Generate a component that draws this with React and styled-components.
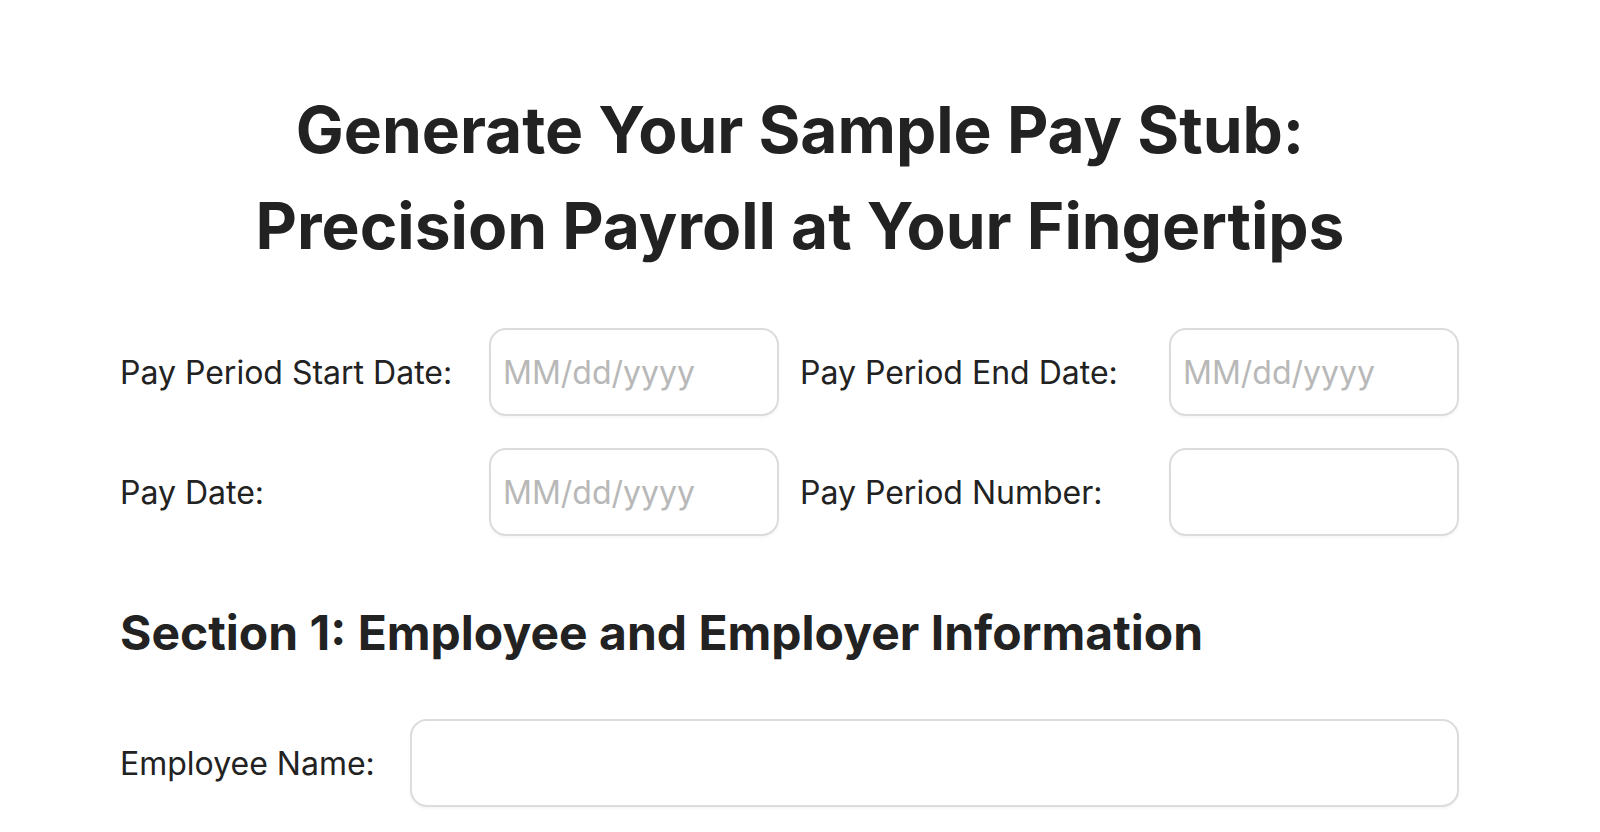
import React from 'react'
import styled, { createGlobalStyle } from 'styled-components'

const GlobalStyle = createGlobalStyle`
  body {
    margin: 0;
    background: #fff;
    font-family: 'Inter', 'Liberation Sans', sans-serif;
    color: #222;
  }
`

const Page = styled.main`
  max-width: 1360px;
  margin: 0 auto;
  padding: 82px 0 40px;
`

const Title = styled.h1`
  margin: 0 0 54px;
  text-align: center;
  font-size: 64px;
  line-height: 96px;
  font-weight: 700;
  color: #222;
`

const FieldGrid = styled.div`
  display: grid;
  grid-template-columns: 1fr 1fr;
  row-gap: 32px;
`

const Field = styled.label`
  display: grid;
  grid-template-columns: 1fr 290px;
  align-items: center;
  padding-right: 21px;
`

const WideField = styled.label`
  display: flex;
  align-items: center;
  gap: 35px;
  padding-right: 21px;
`

const LabelText = styled.span`
  font-size: 32px;
  color: #222;
  white-space: nowrap;
`

const Input = styled.input`
  box-sizing: border-box;
  width: 100%;
  height: 88px;
  padding: 0 12px;
  border: 2px solid #dcdcdc;
  border-radius: 17px;
  box-shadow: 0 2px 3px rgba(0, 0, 0, 0.04);
  font-family: inherit;
  font-size: 32px;
  color: #222;
  background: #fff;
  outline: none;
  &::placeholder {
    color: #b8b8b8;
  }
`

const SectionTitle = styled.h2`
  margin: 62px 0 51px;
  font-size: 48px;
  line-height: 70px;
  font-weight: 700;
  color: #222;
`

const fields = [
  { label: 'Pay Period Start Date:', placeholder: 'MM/dd/yyyy' },
  { label: 'Pay Period End Date:', placeholder: 'MM/dd/yyyy' },
  { label: 'Pay Date:', placeholder: 'MM/dd/yyyy' },
  { label: 'Pay Period Number:', placeholder: '' },
]

export default function App() {
  return (
    <>
      <GlobalStyle />
      <Page>
        <Title>
          Generate Your Sample Pay Stub:
          <br />
          Precision Payroll at Your Fingertips
        </Title>
        <FieldGrid>
          {fields.map(f => (
            <Field key={f.label}>
              <LabelText>{f.label}</LabelText>
              <Input type="text" placeholder={f.placeholder} />
            </Field>
          ))}
        </FieldGrid>
        <SectionTitle>Section 1: Employee and Employer Information</SectionTitle>
        <WideField>
          <LabelText>Employee Name:</LabelText>
          <Input type="text" />
        </WideField>
      </Page>
    </>
  )
}
